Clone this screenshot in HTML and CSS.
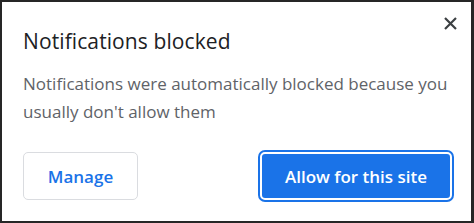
FILE: index.html
```html
<!DOCTYPE html>
<html lang="en">
<head>
    <meta charset="UTF-8">
    <meta name="viewport" content="width=device-width, initial-scale=1.0">
    <title>Notifications blocked</title>
    <link rel="stylesheet" href="styles.css">
</head>
<body>
    <div class="dialog">
        <div class="head">
            <h1 class="title">Notifications blocked</h1>
            <div class="close">
                <svg width="13" height="13" viewBox="0 0 13 13"><path d="M1 1L12 12M12 1L1 12" stroke="#3c4043" stroke-width="2.2"/></svg>
            </div>
        </div>
        <p class="msg">Notifications were automatically blocked because you usually don't allow them</p>
        <div class="btns">
            <div class="btn btnManage">Manage</div>
            <div class="btn btnAllow">Allow for this site</div>
        </div>
    </div>
</body>
</html>
```

FILE: styles.css
```css
*{padding:0;margin:0;box-sizing:border-box;}
html,body{width:474px;height:223px;overflow:hidden;}
body{background:#262626;font-family:"Open Sans","Noto Sans",sans-serif;}
.dialog{margin:2px 3px 2px 2px;height:219px;background:#fff;padding:0 14px 0 21px;}
.head{display:flex;justify-content:space-between;align-items:flex-start;}
.title{font-size:21px;font-weight:400;color:#202124;margin-top:25px;line-height:28px;letter-spacing:0.1px;}
.close{margin-top:15px;width:13px;height:13px;}
.close svg{display:block;}
.msg{margin-top:15px;font-size:17px;line-height:28px;color:#5f6368;width:440px;}
.btns{display:flex;justify-content:space-between;margin-top:26px;padding-right:5px;}
.btn{height:48px;border-radius:5px;font-size:17px;font-weight:600;display:flex;align-items:center;justify-content:center;}
.btnManage{width:115px;border:1px solid #dadce0;color:#1a73e8;}
.btnAllow{width:192px;background:#1a73e8;color:#fff;border:2px solid #fff;box-shadow:0 0 0 2px #1a73e8;}
```
